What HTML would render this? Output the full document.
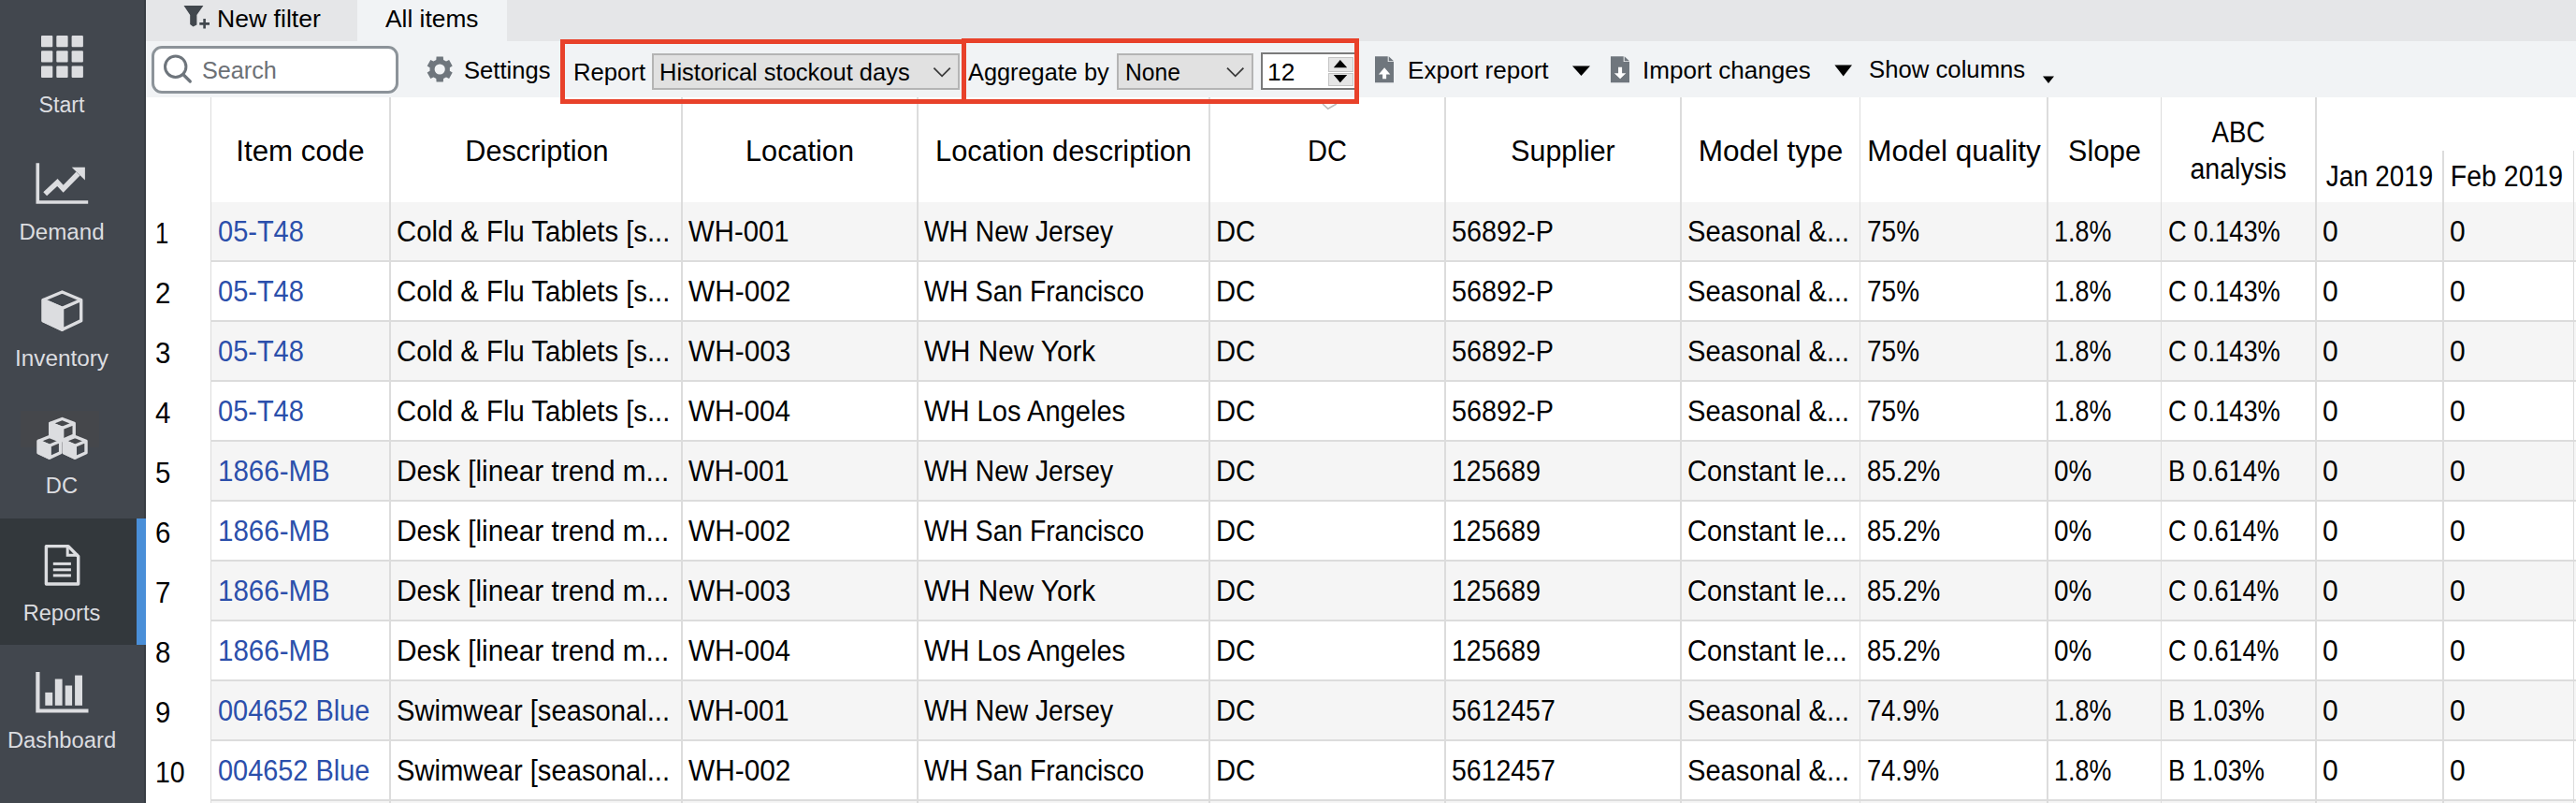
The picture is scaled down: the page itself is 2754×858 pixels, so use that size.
<!DOCTYPE html>
<html><head><meta charset="utf-8">
<style>
html,body{margin:0;padding:0;}
body{width:2754px;height:858px;overflow:hidden;position:relative;background:#fff;font-family:"Liberation Sans",sans-serif;color:#000;}
.a{position:absolute;}
.t{position:absolute;white-space:nowrap;line-height:1;}
.c{text-align:center;}
.lk{color:#2b4fab;}
.sb{color:#dcdde0;}
</style></head><body>
<div class="a" style="left:0;top:0;width:156px;height:858px;background:#42474e"></div>
<div class="a" style="left:153.5px;top:0;width:2.5px;height:858px;background:#383d43"></div>
<div class="a" style="left:0;top:554px;width:146px;height:135px;background:#33383c"></div>
<div class="a" style="left:146px;top:554px;width:10px;height:135px;background:#4a8fd8"></div>
<div class="a" style="left:22px;top:439px;width:84px;height:39px;background:#45474b"></div>
<svg class="a" style="left:0;top:0" width="156" height="858" viewBox="0 0 156 858"><rect x="44.0" y="38.0" width="12.3" height="12.3" rx="1" fill="#dcdde0"/><rect x="44.0" y="54.3" width="12.3" height="12.3" rx="1" fill="#dcdde0"/><rect x="44.0" y="70.6" width="12.3" height="12.3" rx="1" fill="#dcdde0"/><rect x="60.3" y="38.0" width="12.3" height="12.3" rx="1" fill="#dcdde0"/><rect x="60.3" y="54.3" width="12.3" height="12.3" rx="1" fill="#dcdde0"/><rect x="60.3" y="70.6" width="12.3" height="12.3" rx="1" fill="#dcdde0"/><rect x="76.6" y="38.0" width="12.3" height="12.3" rx="1" fill="#dcdde0"/><rect x="76.6" y="54.3" width="12.3" height="12.3" rx="1" fill="#dcdde0"/><rect x="76.6" y="70.6" width="12.3" height="12.3" rx="1" fill="#dcdde0"/><path d="M40.3 174.3 V216 H94.2" fill="none" stroke="#dcdde0" stroke-width="3.6"/><path d="M48.2 207.2 L61.4 195 L67.7 201.8 L83.5 185.5" fill="none" stroke="#dcdde0" stroke-width="5.6" stroke-linejoin="miter" stroke-miterlimit="3"/><path d="M76.7 178.8 H90.9 V192.5 Z" fill="#dcdde0"/><path d="M46.2 320.463 L66.45 329.329 L66.45 352.3 L46.2 342.628 Z" fill="#dcdde0" stroke="#dcdde0" stroke-width="3.4" stroke-linejoin="round"/><path d="M66.45 312 L86.7 320.463 L86.7 342.628 L66.45 352.3 L46.2 342.628 L46.2 320.463 Z M46.2 320.463 L66.45 329.329 L86.7 320.463 M66.45 329.329 L66.45 352.3" fill="none" stroke="#dcdde0" stroke-width="3.4" stroke-linejoin="round"/><path d="M53.8 452.33 L66.5 457.39 L66.5 470.5 L53.8 464.98 Z" fill="#dcdde0" stroke="#dcdde0" stroke-width="3.4" stroke-linejoin="round"/><path d="M66.5 447.5 L79.19999999999999 452.33 L79.19999999999999 464.98 L66.5 470.5 L53.8 464.98 L53.8 452.33 Z M53.8 452.33 L66.5 457.39 L79.19999999999999 452.33 M66.5 457.39 L66.5 470.5" fill="none" stroke="#dcdde0" stroke-width="3.4" stroke-linejoin="round"/><path d="M41.2 471.246 L52.900000000000006 476.218 L52.900000000000006 489.1 L41.2 483.676 Z" fill="#dcdde0" stroke="#dcdde0" stroke-width="3.4" stroke-linejoin="round"/><path d="M52.900000000000006 466.5 L64.6 471.246 L64.6 483.676 L52.900000000000006 489.1 L41.2 483.676 L41.2 471.246 Z M41.2 471.246 L52.900000000000006 476.218 L64.6 471.246 M52.900000000000006 476.218 L52.900000000000006 489.1" fill="none" stroke="#dcdde0" stroke-width="3.4" stroke-linejoin="round"/><path d="M68.4 471.246 L80.2 476.218 L80.2 489.1 L68.4 483.676 Z" fill="#dcdde0" stroke="#dcdde0" stroke-width="3.4" stroke-linejoin="round"/><path d="M80.2 466.5 L92.0 471.246 L92.0 483.676 L80.2 489.1 L68.4 483.676 L68.4 471.246 Z M68.4 471.246 L80.2 476.218 L92.0 471.246 M80.2 476.218 L80.2 489.1" fill="none" stroke="#dcdde0" stroke-width="3.4" stroke-linejoin="round"/><path d="M49.4 583.6 H73 L83.7 594.5 V624 H49.4 Z" fill="none" stroke="#dcdde0" stroke-width="3.4" stroke-linejoin="round"/><path d="M72.2 583.6 V593.3 H83.7" fill="none" stroke="#dcdde0" stroke-width="3"/><rect x="56.8" y="600.9" width="19.1" height="3" fill="#dcdde0"/><rect x="56.8" y="607.3" width="19.1" height="3" fill="#dcdde0"/><rect x="56.8" y="613.4" width="19.1" height="3" fill="#dcdde0"/><path d="M40.4 718 V759.5 H94.5" fill="none" stroke="#dcdde0" stroke-width="4.2"/><rect x="48.3" y="739.9" width="7.900000000000006" height="13.899999999999977" fill="#dcdde0"/><rect x="58.8" y="725.5" width="7.799999999999997" height="28.299999999999955" fill="#dcdde0"/><rect x="69.7" y="732.5" width="7.3999999999999915" height="21.299999999999955" fill="#dcdde0"/><rect x="80.1" y="721.6" width="7.900000000000006" height="32.19999999999993" fill="#dcdde0"/></svg>
<div class="t c sb" style="left:-433.7px;width:1000px;top:100.7px;font-size:23.5px;transform:scaleX(0.9857);transform-origin:50% 0;">Start</div>
<div class="t c sb" style="left:-433.7px;width:1000px;top:236.8px;font-size:23.5px;transform:scaleX(1.0256);transform-origin:50% 0;">Demand</div>
<div class="t c sb" style="left:-433.7px;width:1000px;top:372.3px;font-size:23.5px;transform:scaleX(1.0347);transform-origin:50% 0;">Inventory</div>
<div class="t c sb" style="left:-433.7px;width:1000px;top:507.5px;font-size:23.5px;transform:scaleX(1.0097);transform-origin:50% 0;">DC</div>
<div class="t c sb" style="left:-433.7px;width:1000px;top:644.1px;font-size:23.5px;transform:scaleX(1.0037);transform-origin:50% 0;">Reports</div>
<div class="t c sb" style="left:-433.7px;width:1000px;top:779.5px;font-size:23.5px;transform:scaleX(1.0107);transform-origin:50% 0;">Dashboard</div>
<div class="a" style="left:156px;top:0;width:2598px;height:44px;background:#e5e6e8"></div>
<div class="a" style="left:382px;top:0;width:160px;height:44px;background:#f1f3f5"></div>
<div class="a" style="left:156px;top:44px;width:2598px;height:60px;background:#f1f3f5"></div>
<div class="t " style="left:231.5px;top:7.5px;font-size:25px;transform:scaleX(1.0637);transform-origin:0 0;">New filter</div>
<div class="t " style="left:412.0px;top:7.5px;font-size:25px;transform:scaleX(1.0532);transform-origin:0 0;">All items</div>
<svg class="a" style="left:190px;top:0" width="40" height="40" viewBox="190 0 40 40"><path d="M196.5 6 H217.4 L210.4 16 V26.5 L206.5 28.4 L203.2 26 V16 Z" fill="#41474d"/><path d="M213.3 25.4 H224 M218.6 20 V30.5" stroke="#41474d" stroke-width="2.6"/></svg>
<div class="a" style="left:161.5px;top:48.5px;width:258px;height:45.5px;border:3px solid #8c9399;border-radius:11px;background:#fff"></div>
<svg class="a" style="left:165px;top:50px" width="50" height="50" viewBox="165 50 50 50"><circle cx="187.7" cy="71.2" r="11.2" fill="none" stroke="#6e757c" stroke-width="3"/><path d="M196.3 80 L203.3 87" stroke="#6e757c" stroke-width="3.2" stroke-linecap="round"/></svg>
<div class="t " style="left:216.0px;top:63.2px;font-size:25px;color:#6d7176;transform:scaleX(1.0078);transform-origin:0 0;">Search</div>
<svg class="a" style="left:440px;top:50px" width="60" height="50" viewBox="440 50 60 50"><path d="M466.32 63.92 L466.58 60.48 L473.82 60.48 L474.07 63.92 L476.99 65.61 L480.10 64.10 L483.72 70.38 L480.87 72.31 L480.87 75.69 L483.72 77.62 L480.10 83.90 L477.00 82.39 L474.08 84.08 L473.82 87.52 L466.58 87.52 L466.33 84.08 L463.41 82.39 L460.30 83.90 L456.68 77.62 L459.53 75.69 L459.53 72.31 L456.68 70.38 L460.30 64.10 L463.40 65.61 Z M475.8 74.0 A5.6 5.6 0 1 0 464.59999999999997 74.0 A5.6 5.6 0 1 0 475.8 74.0 Z" fill="#6f767d" fill-rule="evenodd"/></svg>
<div class="t " style="left:495.5px;top:63.2px;font-size:25px;transform:scaleX(1.0247);transform-origin:0 0;">Settings</div>
<div class="t " style="left:613.0px;top:65.0px;font-size:25px;transform:scaleX(1.0274);transform-origin:0 0;">Report</div>
<div class="a" style="left:696.5px;top:56.5px;width:325.5px;height:35px;border:2px solid #b4b4b4;background:#e1e1e1"></div>
<div class="t " style="left:705.0px;top:65.0px;font-size:25px;transform:scaleX(1.0192);transform-origin:0 0;">Historical stockout days</div>
<svg class="a" style="left:990px;top:65px" width="30" height="25" viewBox="990 65 30 25"><path d="M998.4 72.6 L1007.1 81.3 L1015.8 72.6" fill="none" stroke="#3a3a3a" stroke-width="1.8"/></svg>
<div class="t " style="left:1035.0px;top:65.0px;font-size:25px;transform:scaleX(1.0128);transform-origin:0 0;">Aggregate by</div>
<div class="a" style="left:1194px;top:56.5px;width:141.5px;height:35px;border:2px solid #b4b4b4;background:#e1e1e1"></div>
<div class="t " style="left:1202.5px;top:65.0px;font-size:25px;transform:scaleX(0.9842);transform-origin:0 0;">None</div>
<svg class="a" style="left:1305px;top:65px" width="30" height="25" viewBox="1305 65 30 25"><path d="M1312 72.6 L1320.7 81.3 L1329.4 72.6" fill="none" stroke="#3a3a3a" stroke-width="1.8"/></svg>
<div class="a" style="left:1348px;top:56.3px;width:100px;height:35.5px;border:2px solid #7a7a7a;background:#fff"></div>
<div class="a" style="left:1420px;top:61px;width:25px;height:14px;border:1.5px solid #c4c4c4;background:#e6e6e6"></div>
<div class="a" style="left:1420px;top:77.5px;width:25px;height:12.5px;border:1.5px solid #c4c4c4;background:#e6e6e6"></div>
<svg class="a" style="left:1420px;top:60px" width="30" height="32" viewBox="1420 60 30 32"><path d="M1432.8 64 L1440.2 72.2 H1425.8 Z M1425.8 80 H1440.2 L1432.8 88.3 Z" fill="#000"/></svg>
<div class="t " style="left:1354.5px;top:65.0px;font-size:25px;transform:scaleX(1.0520);transform-origin:0 0;">12</div>
<svg class="a" style="left:1467.9px;top:58px" width="26" height="34" viewBox="1467.9 58 26 34"><path d="M1469.9 60.2 H1483.6000000000001 V66 H1489.9 V88.2 H1469.9 Z" fill="#6f767d"/><path d="M1484.6000000000001 60.2 L1489.9 65.3 H1484.6000000000001 Z" fill="#6f767d"/><path d="M1480.0 72.3 L1486.2 79.4 H1482.0 V84.3 H1478.0 V79.4 H1473.8 Z" fill="#fff"/></svg>
<div class="t " style="left:1504.5px;top:62.6px;font-size:25px;transform:scaleX(1.0420);transform-origin:0 0;">Export report</div>
<svg class="a" style="left:1675px;top:65px" width="30" height="20" viewBox="1675 65 30 20"><path d="M1681 70.4 H1700 L1690.5 81 Z" fill="#000"/></svg>
<svg class="a" style="left:1719.9px;top:58px" width="26" height="34" viewBox="1719.9 58 26 34"><path d="M1721.9 60.2 H1735.6000000000001 V66 H1741.9 V88.2 H1721.9 Z" fill="#6f767d"/><path d="M1736.6000000000001 60.2 L1741.9 65.3 H1736.6000000000001 Z" fill="#6f767d"/><path d="M1730.0 71.7 H1734.0 V78.3 H1738.2 L1732.0 84.3 L1725.8 78.3 H1730.0 Z" fill="#fff"/></svg>
<div class="t " style="left:1756.0px;top:62.6px;font-size:25px;transform:scaleX(1.0429);transform-origin:0 0;">Import changes</div>
<svg class="a" style="left:1955px;top:65px" width="30" height="20" viewBox="1955 65 30 20"><path d="M1961.4 69.6 H1980 L1970.7 81.4 Z" fill="#000"/></svg>
<div class="t " style="left:1998.3px;top:62.3px;font-size:25px;transform:scaleX(1.0286);transform-origin:0 0;">Show columns</div>
<svg class="a" style="left:2180px;top:78px" width="20" height="14" viewBox="2180 78 20 14"><path d="M2184 81.4 H2196 L2190 88.9 Z" fill="#000"/></svg>
<div class="a" style="left:156px;top:104px;width:2598px;height:112px;background:#fff"></div>
<div class="a" style="left:226px;top:216px;width:2528px;height:62px;background:#f5f5f5"></div>
<div class="a" style="left:226px;top:278px;width:2528px;height:2px;background:#dcdcdc"></div>
<div class="a" style="left:226px;top:342px;width:2528px;height:2px;background:#dcdcdc"></div>
<div class="a" style="left:226px;top:344px;width:2528px;height:62px;background:#f5f5f5"></div>
<div class="a" style="left:226px;top:406px;width:2528px;height:2px;background:#dcdcdc"></div>
<div class="a" style="left:226px;top:470px;width:2528px;height:2px;background:#dcdcdc"></div>
<div class="a" style="left:226px;top:472px;width:2528px;height:62px;background:#f5f5f5"></div>
<div class="a" style="left:226px;top:534px;width:2528px;height:2px;background:#dcdcdc"></div>
<div class="a" style="left:226px;top:598px;width:2528px;height:2px;background:#dcdcdc"></div>
<div class="a" style="left:226px;top:600px;width:2528px;height:62px;background:#f5f5f5"></div>
<div class="a" style="left:226px;top:662px;width:2528px;height:2px;background:#dcdcdc"></div>
<div class="a" style="left:226px;top:726px;width:2528px;height:2px;background:#dcdcdc"></div>
<div class="a" style="left:226px;top:728px;width:2528px;height:62px;background:#f5f5f5"></div>
<div class="a" style="left:226px;top:790px;width:2528px;height:2px;background:#dcdcdc"></div>
<div class="a" style="left:226px;top:854px;width:2528px;height:2px;background:#dcdcdc"></div>
<div class="a" style="left:226px;top:856px;width:2528px;height:62px;background:#f5f5f5"></div>
<div class="a" style="left:226px;top:918px;width:2528px;height:2px;background:#dcdcdc"></div>
<div class="a" style="left:224.5px;top:104px;width:1.6px;height:754px;background:#dcdcdc"></div>
<div class="a" style="left:416.0px;top:104px;width:1.6px;height:754px;background:#dcdcdc"></div>
<div class="a" style="left:728.0px;top:104px;width:1.6px;height:754px;background:#dcdcdc"></div>
<div class="a" style="left:980.0px;top:104px;width:1.6px;height:754px;background:#dcdcdc"></div>
<div class="a" style="left:1292.0px;top:104px;width:1.6px;height:754px;background:#dcdcdc"></div>
<div class="a" style="left:1544.0px;top:104px;width:1.6px;height:754px;background:#dcdcdc"></div>
<div class="a" style="left:1796.0px;top:104px;width:1.6px;height:754px;background:#dcdcdc"></div>
<div class="a" style="left:1987.6px;top:104px;width:1.6px;height:754px;background:#dcdcdc"></div>
<div class="a" style="left:2188.0px;top:104px;width:1.6px;height:754px;background:#dcdcdc"></div>
<div class="a" style="left:2309.5px;top:104px;width:1.6px;height:754px;background:#dcdcdc"></div>
<div class="a" style="left:2475.4px;top:104px;width:1.6px;height:754px;background:#dcdcdc"></div>
<div class="a" style="left:2611.0px;top:161px;width:1.6px;height:697px;background:#dcdcdc"></div>
<div class="a" style="left:2750.5px;top:161px;width:1.6px;height:697px;background:#dcdcdc"></div>
<div class="t c " style="left:-178.8px;width:1000px;top:146.4px;font-size:31px;transform:scaleX(1.0083);transform-origin:50% 0;">Item code</div>
<div class="t c " style="left:74.4px;width:1000px;top:146.4px;font-size:31px;transform:scaleX(0.9887);transform-origin:50% 0;">Description</div>
<div class="t c " style="left:355.0px;width:1000px;top:146.4px;font-size:31px;transform:scaleX(0.9894);transform-origin:50% 0;">Location</div>
<div class="t c " style="left:637.0px;width:1000px;top:146.4px;font-size:31px;transform:scaleX(0.9937);transform-origin:50% 0;">Location description</div>
<div class="t c " style="left:919.0px;width:1000px;top:146.4px;font-size:31px;transform:scaleX(0.9366);transform-origin:50% 0;">DC</div>
<div class="t c " style="left:1171.0px;width:1000px;top:146.4px;font-size:31px;transform:scaleX(0.9795);transform-origin:50% 0;">Supplier</div>
<div class="t c " style="left:1392.8px;width:1000px;top:146.4px;font-size:31px;transform:scaleX(1.0189);transform-origin:50% 0;">Model type</div>
<div class="t c " style="left:1588.8px;width:1000px;top:146.4px;font-size:31px;transform:scaleX(1.0155);transform-origin:50% 0;">Model quality</div>
<div class="t c " style="left:1749.8px;width:1000px;top:146.4px;font-size:31px;transform:scaleX(0.9805);transform-origin:50% 0;">Slope</div>
<div class="t c " style="left:1893.4px;width:1000px;top:126.3px;font-size:31px;transform:scaleX(0.8935);transform-origin:50% 0;">ABC</div>
<div class="t c " style="left:1893.4px;width:1000px;top:165.4px;font-size:31px;transform:scaleX(0.9209);transform-origin:50% 0;">analysis</div>
<div class="t c " style="left:2044.2px;width:1000px;top:173.4px;font-size:31px;transform:scaleX(0.8968);transform-origin:50% 0;">Jan 2019</div>
<div class="t c " style="left:2180.3px;width:1000px;top:173.4px;font-size:31px;transform:scaleX(0.9180);transform-origin:50% 0;">Feb 2019</div>
<svg class="a" style="left:1408px;top:105px" width="26" height="15" viewBox="1408 105 26 15"><path d="M1414 111 L1419.7 116.2 L1428.9 111" fill="none" stroke="#bbb" stroke-width="1.6"/></svg>
<div class="t " style="left:165.5px;top:233.6px;font-size:31px;transform:scaleX(0.8286);transform-origin:0 0;">1</div>
<div class="t lk" style="left:232.5px;top:231.6px;font-size:31px;transform:scaleX(0.9354);transform-origin:0 0;">05-T48</div>
<div class="t " style="left:424.0px;top:231.6px;font-size:31px;transform:scaleX(0.9444);transform-origin:0 0;">Cold &amp; Flu Tablets [s...</div>
<div class="t " style="left:736.0px;top:231.6px;font-size:31px;transform:scaleX(0.9464);transform-origin:0 0;">WH-001</div>
<div class="t " style="left:988.0px;top:231.6px;font-size:31px;transform:scaleX(0.9090);transform-origin:0 0;">WH New Jersey</div>
<div class="t " style="left:1300.0px;top:231.6px;font-size:31px;transform:scaleX(0.9390);transform-origin:0 0;">DC</div>
<div class="t " style="left:1552.0px;top:231.6px;font-size:31px;transform:scaleX(0.9287);transform-origin:0 0;">56892-P</div>
<div class="t " style="left:1804.0px;top:231.6px;font-size:31px;transform:scaleX(0.9392);transform-origin:0 0;">Seasonal &amp;...</div>
<div class="t " style="left:1995.6px;top:231.6px;font-size:31px;transform:scaleX(0.9033);transform-origin:0 0;">75%</div>
<div class="t " style="left:2196.0px;top:231.6px;font-size:31px;transform:scaleX(0.8676);transform-origin:0 0;">1.8%</div>
<div class="t " style="left:2317.5px;top:231.6px;font-size:31px;transform:scaleX(0.8807);transform-origin:0 0;">C 0.143%</div>
<div class="t " style="left:2483.4px;top:231.6px;font-size:31px;transform:scaleX(0.9667);transform-origin:0 0;">0</div>
<div class="t " style="left:2619.0px;top:231.6px;font-size:31px;transform:scaleX(0.9667);transform-origin:0 0;">0</div>
<div class="t " style="left:165.5px;top:297.6px;font-size:31px;transform:scaleX(0.9500);transform-origin:0 0;">2</div>
<div class="t lk" style="left:232.5px;top:295.6px;font-size:31px;transform:scaleX(0.9354);transform-origin:0 0;">05-T48</div>
<div class="t " style="left:424.0px;top:295.6px;font-size:31px;transform:scaleX(0.9444);transform-origin:0 0;">Cold &amp; Flu Tablets [s...</div>
<div class="t " style="left:736.0px;top:295.6px;font-size:31px;transform:scaleX(0.9625);transform-origin:0 0;">WH-002</div>
<div class="t " style="left:988.0px;top:295.6px;font-size:31px;transform:scaleX(0.9105);transform-origin:0 0;">WH San Francisco</div>
<div class="t " style="left:1300.0px;top:295.6px;font-size:31px;transform:scaleX(0.9390);transform-origin:0 0;">DC</div>
<div class="t " style="left:1552.0px;top:295.6px;font-size:31px;transform:scaleX(0.9287);transform-origin:0 0;">56892-P</div>
<div class="t " style="left:1804.0px;top:295.6px;font-size:31px;transform:scaleX(0.9392);transform-origin:0 0;">Seasonal &amp;...</div>
<div class="t " style="left:1995.6px;top:295.6px;font-size:31px;transform:scaleX(0.9033);transform-origin:0 0;">75%</div>
<div class="t " style="left:2196.0px;top:295.6px;font-size:31px;transform:scaleX(0.8676);transform-origin:0 0;">1.8%</div>
<div class="t " style="left:2317.5px;top:295.6px;font-size:31px;transform:scaleX(0.8807);transform-origin:0 0;">C 0.143%</div>
<div class="t " style="left:2483.4px;top:295.6px;font-size:31px;transform:scaleX(0.9667);transform-origin:0 0;">0</div>
<div class="t " style="left:2619.0px;top:295.6px;font-size:31px;transform:scaleX(0.9667);transform-origin:0 0;">0</div>
<div class="t " style="left:165.5px;top:361.6px;font-size:31px;transform:scaleX(0.9500);transform-origin:0 0;">3</div>
<div class="t lk" style="left:232.5px;top:359.6px;font-size:31px;transform:scaleX(0.9354);transform-origin:0 0;">05-T48</div>
<div class="t " style="left:424.0px;top:359.6px;font-size:31px;transform:scaleX(0.9444);transform-origin:0 0;">Cold &amp; Flu Tablets [s...</div>
<div class="t " style="left:736.0px;top:359.6px;font-size:31px;transform:scaleX(0.9625);transform-origin:0 0;">WH-003</div>
<div class="t " style="left:988.0px;top:359.6px;font-size:31px;transform:scaleX(0.9581);transform-origin:0 0;">WH New York</div>
<div class="t " style="left:1300.0px;top:359.6px;font-size:31px;transform:scaleX(0.9390);transform-origin:0 0;">DC</div>
<div class="t " style="left:1552.0px;top:359.6px;font-size:31px;transform:scaleX(0.9287);transform-origin:0 0;">56892-P</div>
<div class="t " style="left:1804.0px;top:359.6px;font-size:31px;transform:scaleX(0.9392);transform-origin:0 0;">Seasonal &amp;...</div>
<div class="t " style="left:1995.6px;top:359.6px;font-size:31px;transform:scaleX(0.9033);transform-origin:0 0;">75%</div>
<div class="t " style="left:2196.0px;top:359.6px;font-size:31px;transform:scaleX(0.8676);transform-origin:0 0;">1.8%</div>
<div class="t " style="left:2317.5px;top:359.6px;font-size:31px;transform:scaleX(0.8807);transform-origin:0 0;">C 0.143%</div>
<div class="t " style="left:2483.4px;top:359.6px;font-size:31px;transform:scaleX(0.9667);transform-origin:0 0;">0</div>
<div class="t " style="left:2619.0px;top:359.6px;font-size:31px;transform:scaleX(0.9667);transform-origin:0 0;">0</div>
<div class="t " style="left:165.5px;top:425.6px;font-size:31px;transform:scaleX(0.9500);transform-origin:0 0;">4</div>
<div class="t lk" style="left:232.5px;top:423.6px;font-size:31px;transform:scaleX(0.9354);transform-origin:0 0;">05-T48</div>
<div class="t " style="left:424.0px;top:423.6px;font-size:31px;transform:scaleX(0.9444);transform-origin:0 0;">Cold &amp; Flu Tablets [s...</div>
<div class="t " style="left:736.0px;top:423.6px;font-size:31px;transform:scaleX(0.9584);transform-origin:0 0;">WH-004</div>
<div class="t " style="left:988.0px;top:423.6px;font-size:31px;transform:scaleX(0.9389);transform-origin:0 0;">WH Los Angeles</div>
<div class="t " style="left:1300.0px;top:423.6px;font-size:31px;transform:scaleX(0.9390);transform-origin:0 0;">DC</div>
<div class="t " style="left:1552.0px;top:423.6px;font-size:31px;transform:scaleX(0.9287);transform-origin:0 0;">56892-P</div>
<div class="t " style="left:1804.0px;top:423.6px;font-size:31px;transform:scaleX(0.9392);transform-origin:0 0;">Seasonal &amp;...</div>
<div class="t " style="left:1995.6px;top:423.6px;font-size:31px;transform:scaleX(0.9033);transform-origin:0 0;">75%</div>
<div class="t " style="left:2196.0px;top:423.6px;font-size:31px;transform:scaleX(0.8676);transform-origin:0 0;">1.8%</div>
<div class="t " style="left:2317.5px;top:423.6px;font-size:31px;transform:scaleX(0.8807);transform-origin:0 0;">C 0.143%</div>
<div class="t " style="left:2483.4px;top:423.6px;font-size:31px;transform:scaleX(0.9667);transform-origin:0 0;">0</div>
<div class="t " style="left:2619.0px;top:423.6px;font-size:31px;transform:scaleX(0.9667);transform-origin:0 0;">0</div>
<div class="t " style="left:165.5px;top:489.6px;font-size:31px;transform:scaleX(0.9500);transform-origin:0 0;">5</div>
<div class="t lk" style="left:232.5px;top:487.6px;font-size:31px;transform:scaleX(0.9516);transform-origin:0 0;">1866-MB</div>
<div class="t " style="left:424.0px;top:487.6px;font-size:31px;transform:scaleX(0.9609);transform-origin:0 0;">Desk [linear trend m...</div>
<div class="t " style="left:736.0px;top:487.6px;font-size:31px;transform:scaleX(0.9464);transform-origin:0 0;">WH-001</div>
<div class="t " style="left:988.0px;top:487.6px;font-size:31px;transform:scaleX(0.9090);transform-origin:0 0;">WH New Jersey</div>
<div class="t " style="left:1300.0px;top:487.6px;font-size:31px;transform:scaleX(0.9390);transform-origin:0 0;">DC</div>
<div class="t " style="left:1552.0px;top:487.6px;font-size:31px;transform:scaleX(0.9180);transform-origin:0 0;">125689</div>
<div class="t " style="left:1804.0px;top:487.6px;font-size:31px;transform:scaleX(0.9352);transform-origin:0 0;">Constant le...</div>
<div class="t " style="left:1995.6px;top:487.6px;font-size:31px;transform:scaleX(0.8919);transform-origin:0 0;">85.2%</div>
<div class="t " style="left:2196.0px;top:487.6px;font-size:31px;transform:scaleX(0.8977);transform-origin:0 0;">0%</div>
<div class="t " style="left:2317.5px;top:487.6px;font-size:31px;transform:scaleX(0.8894);transform-origin:0 0;">B 0.614%</div>
<div class="t " style="left:2483.4px;top:487.6px;font-size:31px;transform:scaleX(0.9667);transform-origin:0 0;">0</div>
<div class="t " style="left:2619.0px;top:487.6px;font-size:31px;transform:scaleX(0.9667);transform-origin:0 0;">0</div>
<div class="t " style="left:165.5px;top:553.6px;font-size:31px;transform:scaleX(0.9500);transform-origin:0 0;">6</div>
<div class="t lk" style="left:232.5px;top:551.6px;font-size:31px;transform:scaleX(0.9516);transform-origin:0 0;">1866-MB</div>
<div class="t " style="left:424.0px;top:551.6px;font-size:31px;transform:scaleX(0.9609);transform-origin:0 0;">Desk [linear trend m...</div>
<div class="t " style="left:736.0px;top:551.6px;font-size:31px;transform:scaleX(0.9625);transform-origin:0 0;">WH-002</div>
<div class="t " style="left:988.0px;top:551.6px;font-size:31px;transform:scaleX(0.9105);transform-origin:0 0;">WH San Francisco</div>
<div class="t " style="left:1300.0px;top:551.6px;font-size:31px;transform:scaleX(0.9390);transform-origin:0 0;">DC</div>
<div class="t " style="left:1552.0px;top:551.6px;font-size:31px;transform:scaleX(0.9180);transform-origin:0 0;">125689</div>
<div class="t " style="left:1804.0px;top:551.6px;font-size:31px;transform:scaleX(0.9352);transform-origin:0 0;">Constant le...</div>
<div class="t " style="left:1995.6px;top:551.6px;font-size:31px;transform:scaleX(0.8919);transform-origin:0 0;">85.2%</div>
<div class="t " style="left:2196.0px;top:551.6px;font-size:31px;transform:scaleX(0.8977);transform-origin:0 0;">0%</div>
<div class="t " style="left:2317.5px;top:551.6px;font-size:31px;transform:scaleX(0.8696);transform-origin:0 0;">C 0.614%</div>
<div class="t " style="left:2483.4px;top:551.6px;font-size:31px;transform:scaleX(0.9667);transform-origin:0 0;">0</div>
<div class="t " style="left:2619.0px;top:551.6px;font-size:31px;transform:scaleX(0.9667);transform-origin:0 0;">0</div>
<div class="t " style="left:165.5px;top:617.6px;font-size:31px;transform:scaleX(0.9500);transform-origin:0 0;">7</div>
<div class="t lk" style="left:232.5px;top:615.6px;font-size:31px;transform:scaleX(0.9516);transform-origin:0 0;">1866-MB</div>
<div class="t " style="left:424.0px;top:615.6px;font-size:31px;transform:scaleX(0.9609);transform-origin:0 0;">Desk [linear trend m...</div>
<div class="t " style="left:736.0px;top:615.6px;font-size:31px;transform:scaleX(0.9625);transform-origin:0 0;">WH-003</div>
<div class="t " style="left:988.0px;top:615.6px;font-size:31px;transform:scaleX(0.9581);transform-origin:0 0;">WH New York</div>
<div class="t " style="left:1300.0px;top:615.6px;font-size:31px;transform:scaleX(0.9390);transform-origin:0 0;">DC</div>
<div class="t " style="left:1552.0px;top:615.6px;font-size:31px;transform:scaleX(0.9180);transform-origin:0 0;">125689</div>
<div class="t " style="left:1804.0px;top:615.6px;font-size:31px;transform:scaleX(0.9352);transform-origin:0 0;">Constant le...</div>
<div class="t " style="left:1995.6px;top:615.6px;font-size:31px;transform:scaleX(0.8919);transform-origin:0 0;">85.2%</div>
<div class="t " style="left:2196.0px;top:615.6px;font-size:31px;transform:scaleX(0.8977);transform-origin:0 0;">0%</div>
<div class="t " style="left:2317.5px;top:615.6px;font-size:31px;transform:scaleX(0.8696);transform-origin:0 0;">C 0.614%</div>
<div class="t " style="left:2483.4px;top:615.6px;font-size:31px;transform:scaleX(0.9667);transform-origin:0 0;">0</div>
<div class="t " style="left:2619.0px;top:615.6px;font-size:31px;transform:scaleX(0.9667);transform-origin:0 0;">0</div>
<div class="t " style="left:165.5px;top:681.6px;font-size:31px;transform:scaleX(0.9500);transform-origin:0 0;">8</div>
<div class="t lk" style="left:232.5px;top:679.6px;font-size:31px;transform:scaleX(0.9516);transform-origin:0 0;">1866-MB</div>
<div class="t " style="left:424.0px;top:679.6px;font-size:31px;transform:scaleX(0.9609);transform-origin:0 0;">Desk [linear trend m...</div>
<div class="t " style="left:736.0px;top:679.6px;font-size:31px;transform:scaleX(0.9584);transform-origin:0 0;">WH-004</div>
<div class="t " style="left:988.0px;top:679.6px;font-size:31px;transform:scaleX(0.9389);transform-origin:0 0;">WH Los Angeles</div>
<div class="t " style="left:1300.0px;top:679.6px;font-size:31px;transform:scaleX(0.9390);transform-origin:0 0;">DC</div>
<div class="t " style="left:1552.0px;top:679.6px;font-size:31px;transform:scaleX(0.9180);transform-origin:0 0;">125689</div>
<div class="t " style="left:1804.0px;top:679.6px;font-size:31px;transform:scaleX(0.9352);transform-origin:0 0;">Constant le...</div>
<div class="t " style="left:1995.6px;top:679.6px;font-size:31px;transform:scaleX(0.8919);transform-origin:0 0;">85.2%</div>
<div class="t " style="left:2196.0px;top:679.6px;font-size:31px;transform:scaleX(0.8977);transform-origin:0 0;">0%</div>
<div class="t " style="left:2317.5px;top:679.6px;font-size:31px;transform:scaleX(0.8696);transform-origin:0 0;">C 0.614%</div>
<div class="t " style="left:2483.4px;top:679.6px;font-size:31px;transform:scaleX(0.9667);transform-origin:0 0;">0</div>
<div class="t " style="left:2619.0px;top:679.6px;font-size:31px;transform:scaleX(0.9667);transform-origin:0 0;">0</div>
<div class="t " style="left:165.5px;top:745.6px;font-size:31px;transform:scaleX(0.9467);transform-origin:0 0;">9</div>
<div class="t lk" style="left:232.5px;top:743.6px;font-size:31px;transform:scaleX(0.9320);transform-origin:0 0;">004652 Blue</div>
<div class="t " style="left:424.0px;top:743.6px;font-size:31px;transform:scaleX(0.9418);transform-origin:0 0;">Swimwear [seasonal...</div>
<div class="t " style="left:736.0px;top:743.6px;font-size:31px;transform:scaleX(0.9464);transform-origin:0 0;">WH-001</div>
<div class="t " style="left:988.0px;top:743.6px;font-size:31px;transform:scaleX(0.9090);transform-origin:0 0;">WH New Jersey</div>
<div class="t " style="left:1300.0px;top:743.6px;font-size:31px;transform:scaleX(0.9390);transform-origin:0 0;">DC</div>
<div class="t " style="left:1552.0px;top:743.6px;font-size:31px;transform:scaleX(0.9178);transform-origin:0 0;">5612457</div>
<div class="t " style="left:1804.0px;top:743.6px;font-size:31px;transform:scaleX(0.9392);transform-origin:0 0;">Seasonal &amp;...</div>
<div class="t " style="left:1995.6px;top:743.6px;font-size:31px;transform:scaleX(0.8791);transform-origin:0 0;">74.9%</div>
<div class="t " style="left:2196.0px;top:743.6px;font-size:31px;transform:scaleX(0.8676);transform-origin:0 0;">1.8%</div>
<div class="t " style="left:2317.5px;top:743.6px;font-size:31px;transform:scaleX(0.8800);transform-origin:0 0;">B 1.03%</div>
<div class="t " style="left:2483.4px;top:743.6px;font-size:31px;transform:scaleX(0.9667);transform-origin:0 0;">0</div>
<div class="t " style="left:2619.0px;top:743.6px;font-size:31px;transform:scaleX(0.9667);transform-origin:0 0;">0</div>
<div class="t " style="left:165.5px;top:809.6px;font-size:31px;transform:scaleX(0.9194);transform-origin:0 0;">10</div>
<div class="t lk" style="left:232.5px;top:807.6px;font-size:31px;transform:scaleX(0.9320);transform-origin:0 0;">004652 Blue</div>
<div class="t " style="left:424.0px;top:807.6px;font-size:31px;transform:scaleX(0.9418);transform-origin:0 0;">Swimwear [seasonal...</div>
<div class="t " style="left:736.0px;top:807.6px;font-size:31px;transform:scaleX(0.9625);transform-origin:0 0;">WH-002</div>
<div class="t " style="left:988.0px;top:807.6px;font-size:31px;transform:scaleX(0.9105);transform-origin:0 0;">WH San Francisco</div>
<div class="t " style="left:1300.0px;top:807.6px;font-size:31px;transform:scaleX(0.9390);transform-origin:0 0;">DC</div>
<div class="t " style="left:1552.0px;top:807.6px;font-size:31px;transform:scaleX(0.9178);transform-origin:0 0;">5612457</div>
<div class="t " style="left:1804.0px;top:807.6px;font-size:31px;transform:scaleX(0.9392);transform-origin:0 0;">Seasonal &amp;...</div>
<div class="t " style="left:1995.6px;top:807.6px;font-size:31px;transform:scaleX(0.8791);transform-origin:0 0;">74.9%</div>
<div class="t " style="left:2196.0px;top:807.6px;font-size:31px;transform:scaleX(0.8676);transform-origin:0 0;">1.8%</div>
<div class="t " style="left:2317.5px;top:807.6px;font-size:31px;transform:scaleX(0.8800);transform-origin:0 0;">B 1.03%</div>
<div class="t " style="left:2483.4px;top:807.6px;font-size:31px;transform:scaleX(0.9667);transform-origin:0 0;">0</div>
<div class="t " style="left:2619.0px;top:807.6px;font-size:31px;transform:scaleX(0.9667);transform-origin:0 0;">0</div>
<div class="a" style="left:599px;top:41.5px;width:424px;height:59px;border:5px solid #e8412a"></div>
<div class="a" style="left:1028px;top:41px;width:415px;height:59.7px;border:5px solid #e8412a"></div>
</body></html>
